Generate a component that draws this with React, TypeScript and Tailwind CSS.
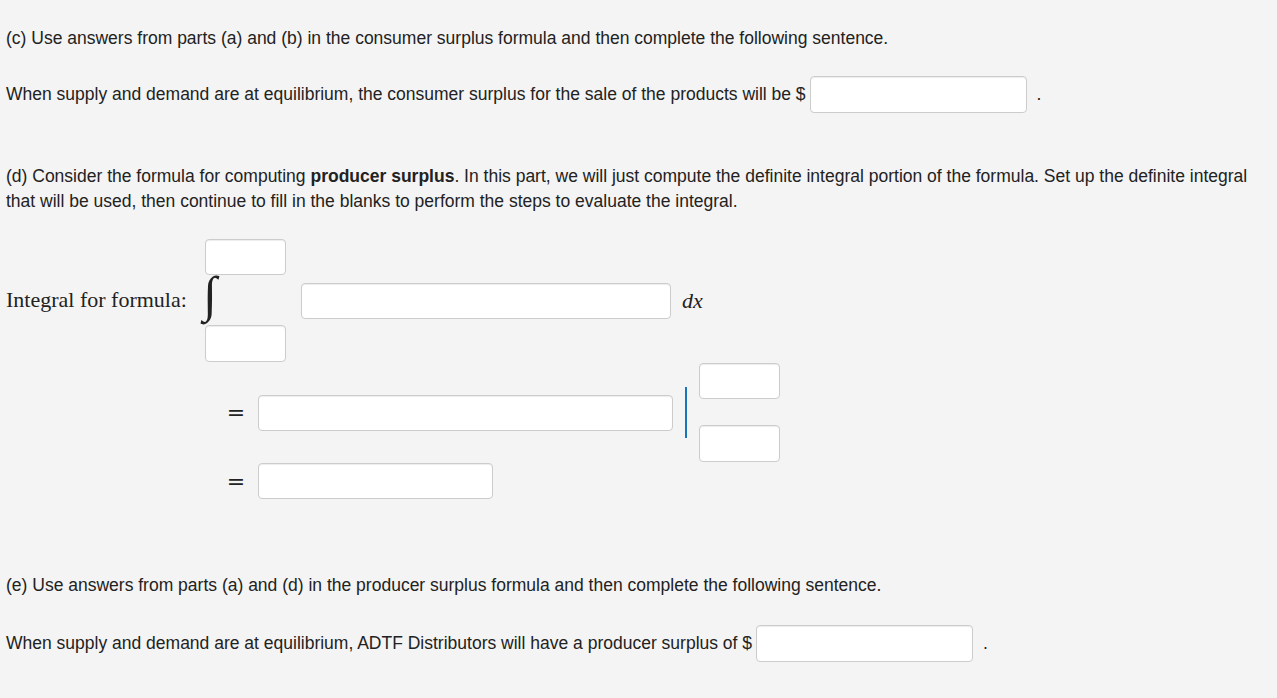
import React from 'react';

function Blank({ className = '' }: { className?: string }) {
    return (
        <input
            type="text"
            className={`block bg-white border border-[#cccccc] rounded-[4px] shadow-[inset_0_1px_1px_rgba(0,0,0,0.075)] outline-none ${className}`}
        />
    );
}

export default function App() {
    return (
        <div
            className="min-h-screen bg-[#f4f4f4] text-[#222222] text-[17.5px] leading-[25px] pl-[6px] pt-[26px]"
            style={{ fontFamily: '"Liberation Sans", Arial, sans-serif' }}
        >
            {/* Part (c) */}
            <p>(c) Use answers from parts (a) and (b) in the consumer surplus formula and then complete the following sentence.</p>
            <div className="flex items-center h-[37px] mt-[25px]">
                <span>When supply and demand are at equilibrium, the consumer surplus for the sale of the products will be $</span>
                <Blank className="w-[217px] h-[37px] ml-[4px]" />
                <span className="ml-[10px]">.</span>
            </div>

            {/* Part (d) */}
            <p className="mt-[51px] pr-[4px]">
                (d) Consider the formula for computing <b>producer surplus</b>. In this part, we will just compute the
                definite integral portion of the formula. Set up the definite integral that will be used, then continue to
                fill in the blanks to perform the steps to evaluate the integral.
            </p>

            <div
                className="mt-[25px] text-[22px]"
                style={{ fontFamily: '"Liberation Serif", "Times New Roman", serif' }}
            >
                {/* integral row */}
                <div className="flex items-center">
                    <span className="w-[199px] mb-[3px]">Integral for formula:</span>
                    <div className="flex flex-col w-[81px]">
                        <Blank className="w-[81px] h-[36px]" />
                        <div className="h-[50px] flex items-center">
                            <span className="italic text-[50px] leading-none -ml-[2px] mb-[12px]">∫</span>
                        </div>
                        <Blank className="w-[81px] h-[37px]" />
                    </div>
                    <Blank className="w-[370px] h-[36px] ml-[15px]" />
                    <span className="italic ml-[11px]">dx</span>
                </div>

                {/* evaluation row */}
                <div className="flex items-center ml-[215px] mt-[1px]">
                    <span className="w-[30px] text-center" style={{ fontFamily: '"DejaVu Serif", serif' }}>=</span>
                    <Blank className="w-[415px] h-[36px] ml-[7px]" />
                    <div className="w-[2px] h-[51px] bg-[#1a74b8] ml-[12px]" />
                    <div className="flex flex-col gap-[26px] ml-[12px]">
                        <Blank className="w-[81px] h-[36px]" />
                        <Blank className="w-[81px] h-[37px]" />
                    </div>
                </div>

                {/* result row */}
                <div className="flex items-center ml-[215px] mt-[1px]">
                    <span className="w-[30px] text-center" style={{ fontFamily: '"DejaVu Serif", serif' }}>=</span>
                    <Blank className="w-[235px] h-[36px] ml-[7px]" />
                </div>
            </div>

            {/* Part (e) */}
            <p className="mt-[74px]">(e) Use answers from parts (a) and (d) in the producer surplus formula and then complete the following sentence.</p>
            <div className="flex items-center h-[37px] mt-[27px]">
                <span>When supply and demand are at equilibrium, ADTF Distributors will have a producer surplus of $</span>
                <Blank className="w-[217px] h-[37px] ml-[4px]" />
                <span className="ml-[10px]">.</span>
            </div>
        </div>
    );
}
